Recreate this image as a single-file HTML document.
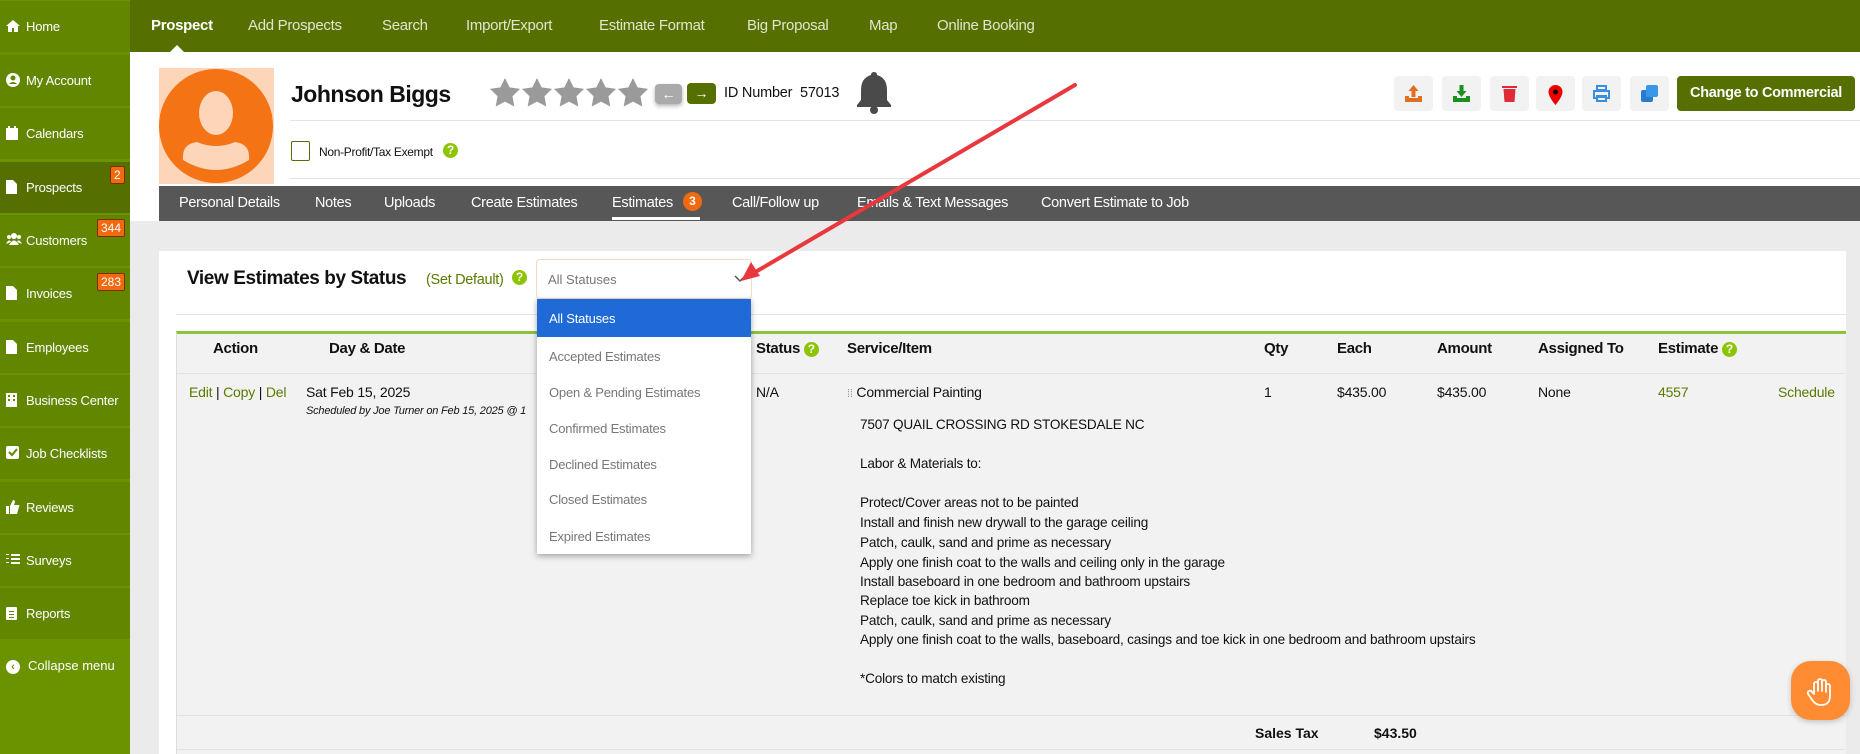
<!DOCTYPE html>
<html><head><meta charset="utf-8"><style>
*{margin:0;padding:0;box-sizing:border-box}
body{width:1860px;height:754px;overflow:hidden;background:#ebebeb;font-family:"Liberation Sans",sans-serif;position:relative;color:#111}
.a{position:absolute;white-space:nowrap}
.sb{position:absolute;left:0;top:0;width:130px;height:754px;background:#6b9300}
.it{position:absolute;left:0;width:130px;height:51px;background:#628600;color:#fff;font-size:13px;line-height:51px;padding-left:26px;letter-spacing:-0.2px}
.it svg{position:absolute;left:6px;top:18px}
.bd{position:absolute;background:#f26a10;color:#fff;font-size:12px;line-height:16px;padding:0 3px;border:1px solid #7a3000;border-radius:2px}
.tn{position:absolute;left:130px;top:0;width:1730px;height:52px;background:#557000}
.tn span{position:absolute;top:17px;font-size:15px;color:#dfe6cc;letter-spacing:-0.3px}
.sn span{position:absolute;top:195px;font-size:14.5px;color:#fff;letter-spacing:-0.3px}
.ib{position:absolute;top:76px;width:39px;height:35px;background:#f2f2f2;border-radius:4px}
.ib svg{position:absolute;left:11px;top:9px}
.th{position:absolute;top:340px;font-size:15px;font-weight:bold;letter-spacing:-0.3px}
.td{position:absolute;top:384px;font-size:14px;letter-spacing:-0.2px}
.ds{position:absolute;left:860px;font-size:13.6px;letter-spacing:-0.2px}
.op{position:absolute;left:549px;font-size:13px;color:#777;letter-spacing:-0.2px}
.g{color:#5a7a00}
.help{display:inline-block;width:15px;height:15px;border-radius:50%;background:#8cc400;color:#fff;font-size:12px;font-weight:bold;text-align:center;line-height:15px;letter-spacing:0}
</style></head><body>
<div class="sb">
<div class="it" style="top:1px"><svg width="14" height="14" viewBox="0 0 14 14"><path d="M7 1L0 7h2v6h4V9h2v4h4V7h2z" fill="#fff"/></svg>Home</div>
<div class="it" style="top:55px"><svg width="14" height="14" viewBox="0 0 14 14"><circle cx="7" cy="7" r="7" fill="#fff"/><circle cx="7" cy="5" r="2.5" fill="#628600"/><path d="M3 11q4-4 8 0" fill="#628600"/></svg>My Account</div>
<div class="it" style="top:108px"><svg width="12" height="14" viewBox="0 0 12 14"><rect x="0" y="2" width="12" height="12" fill="#fff"/><rect x="2" y="0" width="2" height="3" fill="#fff"/><rect x="8" y="0" width="2" height="3" fill="#fff"/></svg>Calendars</div>
<div class="it" style="top:162px;background:#557000"><svg width="11" height="14" viewBox="0 0 11 14"><path d="M0 0h7l4 4v10H0z" fill="#fff"/></svg>Prospects</div>
<div class="bd" style="left:110px;top:166px">2</div>
<div class="it" style="top:215px"><svg width="16" height="12" viewBox="0 0 16 12"><circle cx="8" cy="3" r="3" fill="#fff"/><circle cx="3" cy="4" r="2" fill="#fff"/><circle cx="13" cy="4" r="2" fill="#fff"/><path d="M3 12q5-9 10 0z M0 11q3-6 5-2z M16 11q-3-6-5-2z" fill="#fff"/></svg>Customers</div>
<div class="bd" style="left:97px;top:219px">344</div>
<div class="it" style="top:268px"><svg width="11" height="14" viewBox="0 0 11 14"><path d="M0 0h7l4 4v10H0z" fill="#fff"/></svg>Invoices</div>
<div class="bd" style="left:97px;top:273px">283</div>
<div class="it" style="top:322px"><svg width="11" height="14" viewBox="0 0 11 14"><path d="M0 0h7l4 4v10H0z" fill="#fff"/></svg>Employees</div>
<div class="it" style="top:375px"><svg width="11" height="14" viewBox="0 0 11 14"><path d="M0 0h11v14H0z" fill="#fff"/><path d="M2 2h2v2H2zM7 2h2v2H7zM2 6h2v2H2zM7 6h2v2H7z" fill="#628600"/></svg>Business Center</div>
<div class="it" style="top:428px"><svg width="13" height="13" viewBox="0 0 13 13"><rect width="13" height="13" rx="2" fill="#fff"/><path d="M3 6l3 3 5-6" stroke="#628600" stroke-width="2" fill="none"/></svg>Job Checklists</div>
<div class="it" style="top:482px"><svg width="14" height="14" viewBox="0 0 14 14"><path d="M0 6h3v8H0zM4 6l3-6q2 0 2 2l-1 3h5q1 1 0 2l-2 7H4z" fill="#fff"/></svg>Reviews</div>
<div class="it" style="top:535px"><svg width="14" height="12" viewBox="0 0 14 12"><path d="M0 1h3v1H0zM5 1h9v2H5zM0 5h3v1H0zM5 5h9v2H5zM0 9h3v1H0zM5 9h9v2H5z" fill="#fff"/></svg>Surveys</div>
<div class="it" style="top:588px"><svg width="11" height="14" viewBox="0 0 11 14"><rect y="1" width="11" height="13" rx="1" fill="#fff"/><path d="M3 5h5v1H3zM3 8h5v1H3zM3 11h5v1H3z" fill="#628600"/></svg>Reports</div>
<div class="a" style="left:6px;top:658px;color:#fff;font-size:13px"><span style="display:inline-block;width:14px;height:14px;border-radius:50%;background:#fff;color:#6b9300;font-size:11px;line-height:14px;text-align:center;font-weight:bold;margin-right:8px">‹</span>Collapse menu</div>
</div>

<div class="tn">
<span style="left:21px;color:#fff;font-weight:bold">Prospect</span>
<span style="left:118px">Add Prospects</span>
<span style="left:252px">Search</span>
<span style="left:336px">Import/Export</span>
<span style="left:469px">Estimate Format</span>
<span style="left:617px">Big Proposal</span>
<span style="left:739px">Map</span>
<span style="left:807px">Online Booking</span>
<div style="position:absolute;left:40px;top:45px;width:0;height:0;border-left:7px solid transparent;border-right:7px solid transparent;border-bottom:7px solid #fff"></div>
</div>

<div class="a" style="left:130px;top:52px;width:1730px;height:169px;background:#fff"></div>
<div class="a" style="left:159px;top:68px;width:115px;height:116px;background:#fdd5b8"></div>
<svg class="a" style="left:159px;top:68px" width="115" height="116" viewBox="0 0 115 116"><circle cx="57" cy="58" r="57" fill="#f47314"/><ellipse cx="57" cy="45" rx="17" ry="22" fill="#fdd5b8"/><path d="M24 88q0-12 14-14 19 8 38 0 14 2 14 14v4q-33 20-66 0z" fill="#fdd5b8"/></svg>
<div class="a" style="left:291px;top:81px;font-size:23px;font-weight:bold;letter-spacing:-0.5px">Johnson Biggs</div>
<svg class="a" style="left:489px;top:77px" width="162" height="30" viewBox="0 0 162 30">
<g fill="#9a9a9a"><path id="s" d="M16 1l4.6 9.4 10.4 1.5-7.5 7.3 1.8 10.3L16 24.6 6.7 29.5l1.8-10.3L1 11.9l10.4-1.5z"/><use href="#s" x="32"/><use href="#s" x="64"/><use href="#s" x="96"/><use href="#s" x="128"/></g></svg>
<div class="a" style="left:655px;top:84px;width:27px;height:20px;background:#aaa;border-radius:4px;box-shadow:0 2px 4px rgba(0,0,0,.3);color:#fff;font-size:14px;text-align:center;line-height:20px;font-weight:bold">←</div>
<div class="a" style="left:687px;top:83px;width:29px;height:21px;background:#557000;border-radius:4px;color:#fff;font-size:14px;text-align:center;line-height:21px;font-weight:bold">→</div>
<div class="a" style="left:724px;top:85px;font-size:14.5px;letter-spacing:-0.2px">ID Number&nbsp; 57013</div>
<svg class="a" style="left:857px;top:72px" width="34" height="42" viewBox="0 0 34 42"><path d="M17 0q3 0 3 3 10 3 10 15v10l4 5v2H0v-2l4-5V18Q4 6 14 3q0-3 3-3z" fill="#4a4a4a"/><circle cx="17" cy="38" r="4" fill="#4a4a4a"/></svg>
<div class="a" style="left:290px;top:120px;width:1570px;height:1px;background:#e3e3ea"></div>
<div class="a" style="left:290px;top:178px;width:1570px;height:1px;background:#e3e3ea"></div>
<div class="a" style="left:291px;top:141px;width:19px;height:20px;border:1px solid #557000;border-radius:2px"></div>
<div class="a" style="left:319px;top:145px;font-size:12px;letter-spacing:-0.3px">Non-Profit/Tax Exempt</div>
<div class="a" style="left:443px;top:141px"><span class="help">?</span></div>

<div class="ib" style="left:1394px"><svg width="17" height="17" viewBox="0 0 17 17"><path d="M8.5 0l5 6h-3v6h-4V6h-3z" fill="#e07020"/><path d="M0 11h4v2h9v-2h4v6H0z" fill="#e07020"/></svg></div>
<div class="ib" style="left:1442px"><svg width="17" height="17" viewBox="0 0 17 17"><path d="M6.5 0h4v6h3l-5 6-5-6h3z" fill="#1a9020"/><path d="M0 11h4v2h9v-2h4v6H0z" fill="#1a9020"/></svg></div>
<div class="ib" style="left:1490px"><svg width="17" height="17" viewBox="0 0 17 17"><path d="M1 1h15v2H1zM2.5 4h12l-1 13h-10z" fill="#e02a35"/></svg></div>
<div class="ib" style="left:1536px"><svg width="17" height="20" viewBox="0 0 17 20"><path d="M8.5 0a7 7 0 0 1 7 7c0 5-7 13-7 13S1.5 12 1.5 7a7 7 0 0 1 7-7z" fill="#e00"/><circle cx="8.5" cy="7" r="2.5" fill="#000"/></svg></div>
<div class="ib" style="left:1582px"><svg width="17" height="17" viewBox="0 0 17 17"><path d="M4 1h9v4H4z M1 6h15v7h-3v-2H4v2H1z M4 12h9v4H4z" fill="none" stroke="#3a8ee0" stroke-width="2"/></svg></div>
<div class="ib" style="left:1630px"><svg width="17" height="17" viewBox="0 0 17 17"><rect x="0" y="5" width="12" height="12" rx="2" fill="#2a7ad0"/><rect x="5" y="0" width="12" height="12" rx="2" fill="#3a96e8"/></svg></div>
<div class="a" style="left:1677px;top:76px;width:178px;height:35px;background:#557000;border-radius:4px;color:#fff;font-size:14.5px;font-weight:bold;text-align:center;line-height:35px;letter-spacing:-0.3px">Change to Commercial</div>

<div class="a sn" style="left:159px;top:186px;width:1701px;height:35px;background:#575757"></div>
<div class="sn">
<span style="left:179px">Personal Details</span>
<span style="left:315px">Notes</span>
<span style="left:384px">Uploads</span>
<span style="left:471px">Create Estimates</span>
<span style="left:612px">Estimates</span>
<span style="left:732px">Call/Follow up</span>
<span style="left:857px">Emails &amp; Text Messages</span>
<span style="left:1041px">Convert Estimate to Job</span>
</div>
<div class="a" style="left:683px;top:192px;width:19px;height:19px;border-radius:50%;background:#f26a10;color:#fff;font-size:12px;text-align:center;line-height:19px;font-weight:bold">3</div>
<div class="a" style="left:612px;top:217px;width:88px;height:3px;background:#fff"></div>

<div class="a" style="left:159px;top:251px;width:1687px;height:503px;background:#fff"></div>
<div class="a" style="left:187px;top:268px;font-size:19px;font-weight:bold;letter-spacing:-0.4px">View Estimates by Status</div>
<div class="a g" style="left:426px;top:272px;font-size:14.5px;letter-spacing:-0.3px">(Set Default)</div>
<div class="a" style="left:512px;top:268px"><span class="help">?</span></div>
<div class="a" style="left:536px;top:259px;width:216px;height:40px;border:1px solid #f3d9c4;border-radius:4px;background:#fff"></div>
<div class="a" style="left:548px;top:272px;font-size:13px;color:#777">All Statuses</div>
<svg class="a" style="left:734px;top:275px" width="12" height="8" viewBox="0 0 12 8"><path d="M1 1l5 5 5-5" stroke="#555" stroke-width="1.5" fill="none"/></svg>
<div class="a" style="left:176px;top:314px;width:1670px;height:1px;background:#e3e3ea"></div>

<div class="a" style="left:176px;top:331px;width:1670px;height:423px;background:#f2f2f2;border-left:1px solid #ddd;border-top:3px solid #8cc43c"></div>
<div class="a" style="left:177px;top:373px;width:1668px;height:1px;background:#e2e2e8"></div>
<div class="th" style="left:213px">Action</div>
<div class="th" style="left:329px">Day &amp; Date</div>
<div class="th" style="left:756px">Status <span class="help">?</span></div>
<div class="th" style="left:847px">Service/Item</div>
<div class="th" style="left:1264px">Qty</div>
<div class="th" style="left:1337px">Each</div>
<div class="th" style="left:1437px">Amount</div>
<div class="th" style="left:1538px">Assigned To</div>
<div class="th" style="left:1658px">Estimate <span class="help">?</span></div>

<div class="td g" style="left:189px">Edit <span style="color:#111">|</span> Copy <span style="color:#111">|</span> Del</div>
<div class="td" style="left:306px">Sat Feb 15, 2025</div>
<div class="a" style="left:306px;top:405px;font-size:11px;font-style:italic;letter-spacing:-0.2px">Scheduled by Joe Turner on Feb 15, 2025 @ 1</div>
<div class="td" style="left:756px">N/A</div>
<div class="td" style="left:847px"><span style="color:#999;font-size:11px">⁞⁞</span> Commercial Painting</div>
<div class="td" style="left:1264px">1</div>
<div class="td" style="left:1337px">$435.00</div>
<div class="td" style="left:1437px">$435.00</div>
<div class="td" style="left:1538px">None</div>
<div class="td g" style="left:1658px">4557</div>
<div class="td g" style="left:1778px">Schedule</div>

<div class="ds" style="top:417px">7507 QUAIL CROSSING RD STOKESDALE NC</div>
<div class="ds" style="top:456px">Labor &amp; Materials to:</div>
<div class="ds" style="top:495px">Protect/Cover areas not to be painted</div>
<div class="ds" style="top:515px">Install and finish new drywall to the garage ceiling</div>
<div class="ds" style="top:535px">Patch, caulk, sand and prime as necessary</div>
<div class="ds" style="top:555px">Apply one finish coat to the walls and ceiling only in the garage</div>
<div class="ds" style="top:574px">Install baseboard in one bedroom and bathroom upstairs</div>
<div class="ds" style="top:593px">Replace toe kick in bathroom</div>
<div class="ds" style="top:613px">Patch, caulk, sand and prime as necessary</div>
<div class="ds" style="top:632px">Apply one finish coat to the walls, baseboard, casings and toe kick in one bedroom and bathroom upstairs</div>
<div class="ds" style="top:671px">*Colors to match existing</div>
<div class="a" style="left:177px;top:715px;width:1668px;height:1px;background:#e2e2e8"></div>
<div class="a" style="left:1255px;top:725px;font-size:14px;font-weight:bold">Sales Tax</div>
<div class="a" style="left:1374px;top:725px;font-size:14px;font-weight:bold">$43.50</div>
<div class="a" style="left:177px;top:749px;width:1668px;height:1px;background:#e2e2e8"></div>

<div class="a" style="left:537px;top:299px;width:214px;height:255px;background:#fff;box-shadow:0 2px 6px rgba(0,0,0,.35)"></div>
<div class="a" style="left:537px;top:299px;width:214px;height:38px;background:#1f6ad6"></div>
<div class="op" style="top:311px;color:#fff">All Statuses</div>
<div class="op" style="top:349px">Accepted Estimates</div>
<div class="op" style="top:385px">Open &amp; Pending Estimates</div>
<div class="op" style="top:421px">Confirmed Estimates</div>
<div class="op" style="top:457px">Declined Estimates</div>
<div class="op" style="top:492px">Closed Estimates</div>
<div class="op" style="top:529px">Expired Estimates</div>

<svg class="a" style="left:0;top:0" width="1860" height="754"><line x1="1075" y1="85" x2="752" y2="274" stroke="#e8383d" stroke-width="4" stroke-linecap="round"/><path d="M741 281l10-19 9 14z" fill="#e8383d"/></svg>

<div class="a" style="left:1791px;top:661px;width:59px;height:59px;background:#ff8c33;border-radius:20px;box-shadow:0 2px 6px rgba(0,0,0,.2)"></div>
<svg class="a" style="left:1806px;top:676px" width="30" height="30" viewBox="0 0 30 30"><path d="M8 18V8q0-2 2-2t2 2v7V5q0-2 2-2t2 2v10V6q0-2 2-2t2 2v10-6q0-2 2-2t2 2v10q0 9-9 9-5 0-8-4l-5-7q-1-2 1-3t3 1z" fill="none" stroke="#fff" stroke-width="1.8" stroke-linejoin="round"/></svg>
</body></html>
